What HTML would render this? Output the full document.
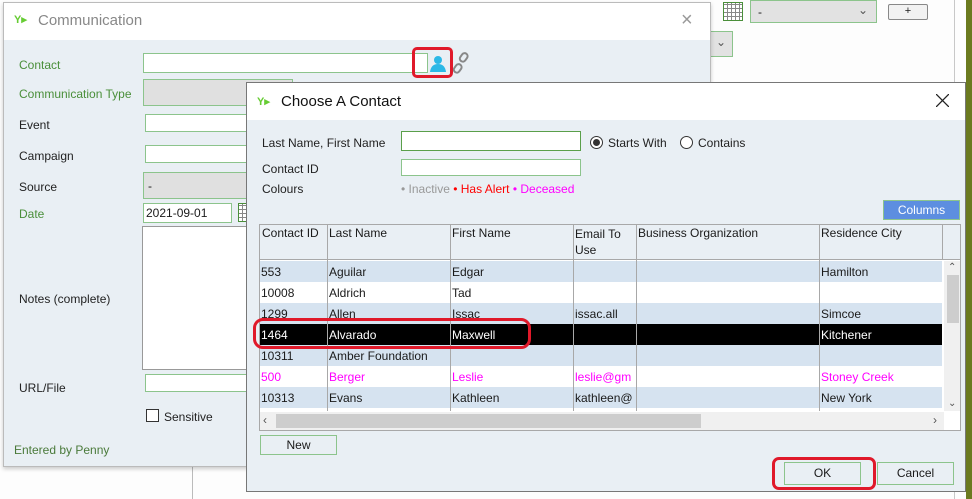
<!DOCTYPE html>
<html><head><meta charset="utf-8"><style>
*{box-sizing:border-box;margin:0;padding:0}
body{width:972px;height:499px;position:relative;overflow:hidden;background:#fdfdfd;font-family:"Liberation Sans",Arial,sans-serif;font-size:12px;color:#1a1a1a}
.a{position:absolute}
.inp{position:absolute;background:#fff;border:1px solid #8cc48c;height:21px}
.lbl{position:absolute;font-size:12px;color:#222}
.row{position:absolute;left:260px;width:682px;height:21px}
.c{position:absolute;top:4px;font-size:12px;white-space:nowrap;overflow:hidden}
.vl{position:absolute;top:224px;width:1px;height:187px;background:#a8a8a8}
.btn{position:absolute;background:#e9eff4;border:1px solid #8cc48c;text-align:center;font-size:12px;line-height:18px}
.cal{position:absolute;width:20px;height:19px;border:1px solid #4a8f3a;background:repeating-linear-gradient(90deg,transparent 0 3px,#888 3px 4px),repeating-linear-gradient(0deg,#fff 0 3px,#888 3px 4px)}
</style></head><body>
<div class="a" style="left:954px;top:0;width:1px;height:499px;background:#c8c8c8"></div>
<div class="a" style="left:966px;top:0;width:6px;height:499px;background:#6b7a1f"></div>
<div class="cal" style="left:723px;top:2px"></div>
<div class="a" style="left:750px;top:0;width:127px;height:23px;background:#e2e2e2;border:1px solid #8cc48c;padding:4px 7px">-<span style="position:absolute;right:8px;top:2px;color:#555">&#8964;</span></div>
<div class="a" style="left:888px;top:4px;width:40px;height:16px;border:1px solid #888;border-radius:2px;background:#f2f2f2;text-align:center;font-size:11px;line-height:13px">+</div>
<div class="a" style="left:703px;top:31px;width:30px;height:26px;background:#e2e2e2;border:1px solid #8cc48c;color:#555;padding:3px 0 0 12px">&#8964;</div>
<div class="a" style="left:192px;top:466px;width:1px;height:33px;background:#bbb"></div>

<div class="a" style="left:3px;top:2px;width:708px;height:465px;background:#e9eff4;border:1px solid #bbb;box-shadow:0 2px 4px rgba(0,0,0,.2)"></div>
<div class="a" style="left:4px;top:3px;width:706px;height:37px;background:#fff"></div>
<div class="a" style="left:14px;top:13px;color:#6c3;font-size:11px;font-weight:bold">&#89;&#9656;</div>
<div class="a" style="left:38px;top:12px;font-size:15px;color:#888">Communication</div>
<div class="a" style="left:681px;top:9px;font-size:20px;color:#999">&#215;</div>
<div class="lbl" style="left:19px;top:58px;color:#4a8f3a">Contact</div>
<div class="inp" style="left:143px;top:53px;width:285px;height:20px"></div>
<div class="a" style="left:412px;top:47px;width:41px;height:31px;border:3px solid #e0192a;border-radius:5px"></div>
<div class="a" style="left:430px;top:55px;width:16px;height:17px"><svg width="16" height="17"><circle cx="8" cy="5" r="4" fill="#2bb8e6"/><path d="M0 17 Q1 9 8 9 Q15 9 16 17Z" fill="#2bb8e6"/></svg></div>
<div class="a" style="left:453px;top:52px"><svg width="16" height="24"><g fill="none" stroke="#888" stroke-width="2"><rect x="8" y="1" width="6" height="9" rx="3" transform="rotate(35 11 5)"/><rect x="2" y="12" width="6" height="9" rx="3" transform="rotate(35 5 16)"/></g></svg></div>
<div class="lbl" style="left:19px;top:87px;color:#4a8f3a">Communication Type</div>
<div class="a" style="left:143px;top:79px;width:150px;height:27px;background:#e0e0e0;border:1px solid #8cc48c"></div>
<div class="lbl" style="left:19px;top:118px">Event</div>
<div class="inp" style="left:145px;top:114px;width:110px;height:18px"></div>
<div class="lbl" style="left:19px;top:149px">Campaign</div>
<div class="inp" style="left:145px;top:145px;width:110px;height:18px"></div>
<div class="lbl" style="left:19px;top:180px">Source</div>
<div class="a" style="left:143px;top:172px;width:110px;height:27px;background:#e0e0e0;border:1px solid #8cc48c;padding:6px 4px">-</div>
<div class="lbl" style="left:19px;top:207px;color:#4a8f3a">Date</div>
<div class="inp" style="left:143px;top:203px;width:89px;height:20px;padding:2px 2px;font-size:12px">2021-09-01</div>
<div class="cal" style="left:238px;top:203px;width:12px"></div>
<div class="a" style="left:142px;top:226px;width:110px;height:144px;background:#fff;border:1px solid #999"></div>
<div class="lbl" style="left:19px;top:292px">Notes (complete)</div>
<div class="lbl" style="left:19px;top:381px">URL/File</div>
<div class="inp" style="left:145px;top:374px;width:105px;height:18px"></div>
<div class="a" style="left:146px;top:409px;width:13px;height:13px;border:1px solid #333;background:#fff"></div>
<div class="lbl" style="left:164px;top:410px">Sensitive</div>
<div class="lbl" style="left:14px;top:443px;color:#4a7a3a">Entered by Penny</div>

<div class="a" style="left:246px;top:82px;width:720px;height:410px;background:#e9eff4;border:1px solid #777"></div>
<div class="a" style="left:247px;top:83px;width:718px;height:37px;background:#fff"></div>
<div class="a" style="left:257px;top:95px;color:#6c3;font-size:11px;font-weight:bold">&#89;&#9656;</div>
<div class="a" style="left:281px;top:93px;font-size:15px;color:#111">Choose A Contact</div>
<div class="a" style="left:936px;top:94px"><svg width="13" height="13"><path d="M0 0L13 13M13 0L0 13" stroke="#222" stroke-width="1.3"/></svg></div>
<div class="lbl" style="left:262px;top:136px">Last Name, First Name</div>
<div class="inp" style="left:401px;top:131px;width:180px;height:20px;border-color:#5a9f4a"></div>
<div class="a" style="left:590px;top:136px;width:13px;height:13px;border:1px solid #333;border-radius:50%;background:#fff"><div style="margin:2px;width:7px;height:7px;border-radius:50%;background:#333"></div></div>
<div class="lbl" style="left:608px;top:136px">Starts With</div>
<div class="a" style="left:680px;top:136px;width:13px;height:13px;border:1px solid #333;border-radius:50%;background:#fff"></div>
<div class="lbl" style="left:698px;top:136px">Contains</div>
<div class="lbl" style="left:262px;top:162px">Contact ID</div>
<div class="inp" style="left:401px;top:159px;width:180px;height:17px"></div>
<div class="lbl" style="left:262px;top:182px">Colours</div>
<div class="a" style="left:401px;top:182px;font-size:12px;color:#999">• Inactive <span style="color:#f00">• Has Alert</span> <span style="color:#f0f">• Deceased</span></div>
<div class="a" style="left:883px;top:200px;width:77px;height:20px;background:#5d8ee0;border:1px solid #8cc48c;color:#fff;text-align:center;line-height:18px">Columns</div>

<div class="a" style="left:259px;top:224px;width:702px;height:207px;border:1px solid #a8a8a8;background:#fff"></div>
<div class="a" style="left:260px;top:225px;width:700px;height:35px;background:#e9eff4;border-bottom:1px solid #a8a8a8"></div>
<div class="a" style="left:262px;top:226px">Contact ID</div>
<div class="a" style="left:329px;top:226px">Last Name</div>
<div class="a" style="left:452px;top:226px">First Name</div>
<div class="a" style="left:575px;top:226px;line-height:16px">Email To<br>Use</div>
<div class="a" style="left:638px;top:226px">Business Organization</div>
<div class="a" style="left:821px;top:226px">Residence City</div>

<div class="row" style="top:261px;background:#d6e3f0"><span class="c" style="left:1px">553</span><span class="c" style="left:69px">Aguilar</span><span class="c" style="left:192px">Edgar</span><span class="c" style="left:561px">Hamilton</span></div>
<div class="row" style="top:282px;background:#fff"><span class="c" style="left:1px">10008</span><span class="c" style="left:69px">Aldrich</span><span class="c" style="left:192px">Tad</span></div>
<div class="row" style="top:303px;background:#d6e3f0"><span class="c" style="left:1px">1299</span><span class="c" style="left:69px">Allen</span><span class="c" style="left:192px">Issac</span><span class="c" style="left:315px">issac.all</span><span class="c" style="left:561px">Simcoe</span></div>
<div class="row" style="top:324px;background:#000;color:#fff"><span class="c" style="left:1px">1464</span><span class="c" style="left:69px">Alvarado</span><span class="c" style="left:192px">Maxwell</span><span class="c" style="left:561px">Kitchener</span></div>
<div class="row" style="top:345px;background:#d6e3f0"><span class="c" style="left:1px">10311</span><span class="c" style="left:69px">Amber Foundation</span></div>
<div class="row" style="top:366px;background:#fff;color:#f0f"><span class="c" style="left:1px">500</span><span class="c" style="left:69px">Berger</span><span class="c" style="left:192px">Leslie</span><span class="c" style="left:315px;width:60px">leslie@gm</span><span class="c" style="left:561px">Stoney Creek</span></div>
<div class="row" style="top:387px;background:#d6e3f0"><span class="c" style="left:1px">10313</span><span class="c" style="left:69px">Evans</span><span class="c" style="left:192px">Kathleen</span><span class="c" style="left:315px;width:60px">kathleen@</span><span class="c" style="left:561px">New York</span></div>
<div class="vl" style="left:327px"></div><div class="vl" style="left:450px"></div><div class="vl" style="left:573px"></div><div class="vl" style="left:636px"></div><div class="vl" style="left:819px"></div><div class="vl" style="left:942px;height:36px"></div>
<div class="a" style="left:944px;top:261px;width:16px;height:150px;background:#f0f0f0"></div>
<div class="a" style="left:947px;top:275px;width:12px;height:48px;background:#cdcdcd"></div>
<div class="a" style="left:948px;top:262px;font-size:10px;color:#555">&#8963;</div>
<div class="a" style="left:948px;top:398px;font-size:10px;color:#555">&#8964;</div>
<div class="a" style="left:260px;top:412px;width:684px;height:18px;background:#f0f0f0"></div>
<div class="a" style="left:276px;top:414px;width:425px;height:14px;background:#cdcdcd"></div>
<div class="a" style="left:263px;top:413px;font-size:12px;color:#555">&#8249;</div>
<div class="a" style="left:933px;top:413px;font-size:12px;color:#555">&#8250;</div>

<div class="btn" style="left:260px;top:435px;width:77px;height:20px">New</div>
<div class="btn" style="left:784px;top:462px;width:77px;height:23px;line-height:21px">OK</div>
<div class="btn" style="left:877px;top:462px;width:77px;height:23px;line-height:21px">Cancel</div>

<div class="a" style="left:253px;top:318px;width:278px;height:31px;border:3px solid #e0192a;border-radius:10px"></div>
<div class="a" style="left:772px;top:457px;width:104px;height:33px;border:3px solid #e0192a;border-radius:7px"></div>
</body></html>
